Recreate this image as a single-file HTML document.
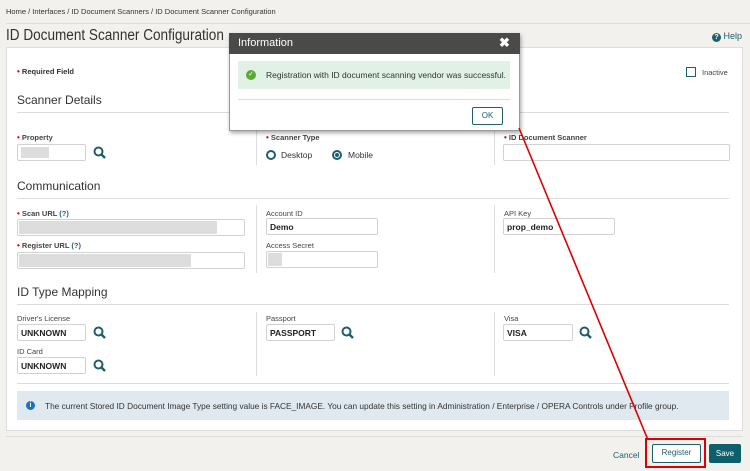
<!DOCTYPE html>
<html><head><style>
*{box-sizing:border-box;margin:0;padding:0}
body{width:750px;height:471px;background:#f2f1ee;font-family:"Liberation Sans",sans-serif;color:#333;position:relative;overflow:hidden;font-size:8px}
.a{position:absolute}
.lbl{font-size:7.5px;color:#444;position:absolute}
.req{color:#d00;font-size:8px}
.b{font-weight:bold}
.inp{position:absolute;background:#fff;border:1px solid #d2d2d2;border-radius:2px;height:17px;font-size:8.5px;font-weight:bold;padding:3px 3px;color:#222}
.h{position:absolute;font-size:12px;color:#333}
.hr{position:absolute;height:1px;background:#dcdcdc}
.vr{position:absolute;width:1px;background:#ddd}
.blur{position:absolute;background:#ddd}
.rad{position:absolute;width:10px;height:10px;border:2px solid #1e5f6b;border-radius:50%}
</style></head><body>
<div class="a" style="left:6px;top:7px;font-size:7.5px;color:#333">Home / Interfaces / ID Document Scanners / ID Document Scanner Configuration</div>
<div class="hr" style="left:6px;top:23px;width:744px;background:#ddd"></div>
<div class="a" style="left:6px;top:27px;font-size:15.5px;color:#333;transform:scaleX(0.875);transform-origin:0 0;white-space:nowrap">ID Document Scanner Configuration</div>
<div class="a" style="left:712px;top:31px;font-size:9px;color:#1e5f6b"><span style="display:inline-block;width:9px;height:9px;border-radius:50%;background:#1e5f6b;color:#fff;font-size:7px;text-align:center;line-height:9px;font-weight:bold">?</span> Help</div>
<div class="a" style="left:6px;top:47px;width:737px;height:384px;background:#fff;border:1px solid #ddd"></div>
<div class="a b" style="left:17px;top:67px;font-size:7.5px"><span class="req">•</span> Required Field</div>
<div class="a" style="left:686px;top:67px;width:10px;height:10px;border:1.5px solid #1e5f6b"></div>
<div class="a" style="left:702px;top:68px;font-size:7.5px;color:#444">Inactive</div>

<div class="h" style="left:17px;top:93px">Scanner Details</div>
<div class="hr" style="left:17px;top:112px;width:712px"></div>
<div class="lbl b" style="left:17px;top:133px"><span class="req">•</span> Property</div>
<div class="inp" style="left:17px;top:144px;width:69px"></div><div class="blur" style="left:21px;top:147px;width:28px;height:11px"></div>
<svg class="a" style="left:93px;top:146px" width="13" height="13" viewBox="0 0 13 13"><circle cx="5.5" cy="5.5" r="4" fill="none" stroke="#1e5f6b" stroke-width="2"/><path d="M8.5 8.5L12 12" stroke="#1e5f6b" stroke-width="2.4"/></svg>
<div class="vr" style="left:256px;top:125px;height:40px"></div>
<div class="lbl b" style="left:266px;top:133px"><span class="req">•</span> Scanner Type</div>
<div class="rad" style="left:266px;top:150px"></div><div class="a" style="left:281px;top:150px;font-size:8.5px">Desktop</div>
<div class="rad" style="left:332px;top:150px"><div style="width:4px;height:4px;background:#1e5f6b;border-radius:50%;margin:1px"></div></div><div class="a" style="left:348px;top:150px;font-size:8.5px">Mobile</div>
<div class="vr" style="left:494px;top:125px;height:40px"></div>
<div class="lbl b" style="left:504px;top:133px"><span class="req">•</span> ID Document Scanner</div>
<div class="inp" style="left:503px;top:144px;width:227px"></div>

<div class="h" style="left:17px;top:179px">Communication</div>
<div class="hr" style="left:17px;top:198px;width:712px"></div>
<div class="lbl b" style="left:17px;top:209px"><span class="req">•</span> Scan URL <span style="color:#1e5f8b">(?)</span></div>
<div class="inp" style="left:17px;top:219px;width:228px"></div><div class="blur" style="left:19px;top:221px;width:198px;height:13px"></div>
<div class="lbl b" style="left:17px;top:241px"><span class="req">•</span> Register URL <span style="color:#1e5f8b">(?)</span></div>
<div class="inp" style="left:17px;top:252px;width:228px"></div><div class="blur" style="left:19px;top:254px;width:172px;height:13px"></div>
<div class="vr" style="left:256px;top:205px;height:68px"></div>
<div class="lbl" style="left:266px;top:209px">Account ID</div>
<div class="inp" style="left:266px;top:218px;width:112px">Demo</div>
<div class="lbl" style="left:266px;top:241px">Access Secret</div>
<div class="inp" style="left:266px;top:251px;width:112px"></div><div class="blur" style="left:268px;top:253px;width:14px;height:13px"></div>
<div class="vr" style="left:494px;top:205px;height:68px"></div>
<div class="lbl" style="left:504px;top:209px">API Key</div>
<div class="inp" style="left:503px;top:218px;width:112px">prop_demo</div>

<div class="h" style="left:17px;top:285px">ID Type Mapping</div>
<div class="hr" style="left:17px;top:304px;width:712px"></div>
<div class="lbl" style="left:17px;top:314px">Driver's License</div>
<div class="inp" style="left:17px;top:324px;width:69px">UNKNOWN</div>
<svg class="a" style="left:93px;top:326px" width="13" height="13" viewBox="0 0 13 13"><circle cx="5.5" cy="5.5" r="4" fill="none" stroke="#1e5f6b" stroke-width="2"/><path d="M8.5 8.5L12 12" stroke="#1e5f6b" stroke-width="2.4"/></svg>
<div class="lbl" style="left:17px;top:347px">ID Card</div>
<div class="inp" style="left:17px;top:357px;width:69px">UNKNOWN</div>
<svg class="a" style="left:93px;top:359px" width="13" height="13" viewBox="0 0 13 13"><circle cx="5.5" cy="5.5" r="4" fill="none" stroke="#1e5f6b" stroke-width="2"/><path d="M8.5 8.5L12 12" stroke="#1e5f6b" stroke-width="2.4"/></svg>
<div class="vr" style="left:256px;top:312px;height:64px"></div>
<div class="lbl" style="left:266px;top:314px">Passport</div>
<div class="inp" style="left:266px;top:324px;width:69px">PASSPORT</div>
<svg class="a" style="left:341px;top:326px" width="13" height="13" viewBox="0 0 13 13"><circle cx="5.5" cy="5.5" r="4" fill="none" stroke="#1e5f6b" stroke-width="2"/><path d="M8.5 8.5L12 12" stroke="#1e5f6b" stroke-width="2.4"/></svg>
<div class="vr" style="left:494px;top:312px;height:64px"></div>
<div class="lbl" style="left:504px;top:314px">Visa</div>
<div class="inp" style="left:503px;top:324px;width:70px">VISA</div>
<svg class="a" style="left:579px;top:326px" width="13" height="13" viewBox="0 0 13 13"><circle cx="5.5" cy="5.5" r="4" fill="none" stroke="#1e5f6b" stroke-width="2"/><path d="M8.5 8.5L12 12" stroke="#1e5f6b" stroke-width="2.4"/></svg>
<div class="hr" style="left:17px;top:383px;width:712px"></div>
<div class="a" style="left:17px;top:391px;width:712px;height:29px;background:#dfe9ef"></div>
<div class="a" style="left:26px;top:401px;width:9px;height:9px;border-radius:50%;background:#1a73c0;color:#fff;font-size:7px;font-weight:bold;text-align:center;line-height:9px">i</div>
<div class="a" style="left:45px;top:401px;font-size:8.3px;color:#333">The current Stored ID Document Image Type setting value is FACE_IMAGE. You can update this setting in Administration / Enterprise / OPERA Controls under Profile group.</div>

<div class="hr" style="left:6px;top:436px;width:737px;background:#ddd"></div>
<div class="a" style="left:613px;top:450px;font-size:8.5px;color:#1e5f6b">Cancel</div>
<div class="a" style="left:652px;top:444px;width:49px;height:19px;border:1.5px solid #1e5f6b;border-radius:2px;background:#fff;font-size:8px;color:#1e5f6b;text-align:center;line-height:16px">Register</div>
<div class="a" style="left:645px;top:438px;width:61px;height:30px;border:2px solid #d00"></div>
<div class="a" style="left:709px;top:444px;width:32px;height:19px;background:#0d5f6b;border-radius:2px;color:#fff;font-size:8px;text-align:center;line-height:19px">Save</div>

<div class="a" style="left:229px;top:33px;width:291px;height:98px;background:#fff;border:1px solid #999;box-shadow:1px 2px 4px rgba(0,0,0,.35)"></div>
<div class="a" style="left:229px;top:33px;width:291px;height:21px;background:#4a4a48;color:#fff;font-size:11px;padding:4px 9px">Information</div>
<div class="a" style="left:499px;top:35px;color:#fff;font-size:13px;font-weight:bold">✖</div>
<div class="a" style="left:238px;top:61px;width:272px;height:28px;background:#e1f1e5"></div>
<div class="a" style="left:246px;top:70px;width:10px;height:10px;border-radius:50%;background:#5ea935;color:#fff;font-size:7px;text-align:center;line-height:10px">✓</div>
<div class="a" style="left:266px;top:70px;font-size:8.5px;color:#333">Registration with ID document scanning vendor was successful.</div>
<div class="hr" style="left:238px;top:99px;width:272px"></div>
<div class="a" style="left:472px;top:107px;width:31px;height:18px;border:1.5px solid #1e5f6b;border-radius:2px;font-size:8px;color:#1e5f6b;text-align:center;line-height:15px">OK</div>

<svg class="a" style="left:0;top:0" width="750" height="471"><line x1="519" y1="128" x2="648" y2="440" stroke="#d00" stroke-width="1.6"/></svg>
</body></html>
